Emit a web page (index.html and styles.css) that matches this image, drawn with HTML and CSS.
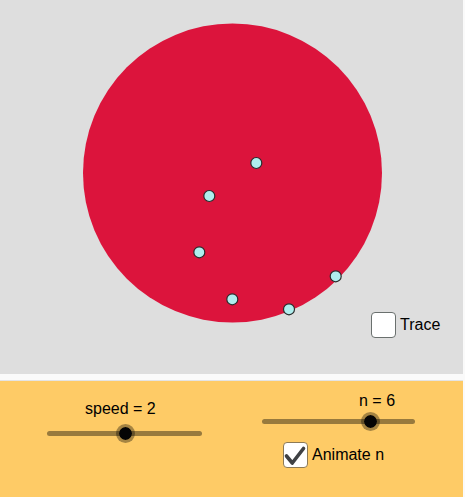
FILE: index.html
```html
<!DOCTYPE html>
<html>
<head>
<meta charset="utf-8">
<link rel="stylesheet" href="styles.css">
</head>
<body>
<div class="app">
  <div class="canvas">
    <svg class="graph" width="463" height="374" viewBox="0 0 463 374">
      <circle cx="232.5" cy="173" r="149.5" fill="#dc143c"/>
      <g fill="#afeeee" stroke="#2b2b2b" stroke-width="1.2">
        <circle cx="256.3" cy="163" r="5.5"/>
        <circle cx="209.3" cy="196" r="5.5"/>
        <circle cx="199.3" cy="252.3" r="5.5"/>
        <circle cx="232.3" cy="299.3" r="5.5"/>
        <circle cx="289" cy="309.3" r="5.5"/>
        <circle cx="335.7" cy="276.3" r="5.5"/>
      </g>
    </svg>
    <label class="check trace">
      <span class="box"></span>
      <span class="check-label">Trace</span>
    </label>
  </div>
  <div class="divider"></div>
  <div class="panel">
    <div class="col col-left">
      <div class="slider-label label-speed">speed = 2</div>
      <div class="slider">
        <div class="track"></div>
        <div class="knob" style="left: 68.5px"></div>
      </div>
    </div>
    <div class="col col-right">
      <div class="slider-label label-n">n = 6</div>
      <div class="slider">
        <div class="track"></div>
        <div class="knob" style="left: 98.5px"></div>
      </div>
      <label class="check animate">
        <span class="box">
          <svg width="26" height="27" viewBox="0 0 26 27">
            <path d="M3.5 14 L9.3 21 L20.5 6.5" fill="none" stroke="#3f4144" stroke-width="3.6" stroke-linecap="round" stroke-linejoin="round"/>
          </svg>
        </span>
        <span class="check-label">Animate n</span>
      </label>
    </div>
  </div>
</div>
</body>
</html>
```

FILE: styles.css
```css
html, body {
  margin: 0;
  padding: 0;
}

body {
  font-family: "Liberation Sans", Arial, sans-serif;
  font-size: 16px;
  color: #000;
  background: #fafafa;
}

.app {
  width: 463px;
  height: 497px;
  overflow: hidden;
}

.canvas {
  position: relative;
  height: 374px;
  background: #dedede;
}

.graph {
  display: block;
}

.divider {
  height: 6px;
  background: #fafafa;
  border-bottom: 1px solid #e4e4e4;
}

.panel {
  height: 116px;
  background: #fecb66;
  display: flex;
}

.col {
  display: flex;
  flex-direction: column;
}

.col-left {
  margin-left: 47px;
  width: 155px;
  padding-top: 19px;
}

.col-right {
  margin-left: 60px;
  width: 153px;
  padding-top: 11px;
}

.slider-label {
  line-height: 18px;
  height: 18px;
  white-space: nowrap;
}

.label-speed {
  margin-left: 38px;
}

.label-n {
  margin-left: 97px;
}

.col-left .slider {
  margin-top: 6px;
}

.col-right .slider {
  margin-top: 2px;
}

.slider {
  position: relative;
  height: 19px;
  display: flex;
  align-items: center;
}

.track {
  width: 100%;
  height: 5px;
  border-radius: 3px;
  background: rgba(0, 0, 0, 0.4);
}

.knob {
  position: absolute;
  top: 0;
  width: 13px;
  height: 13px;
  border-radius: 50%;
  background: #050505;
  border: 3px solid rgba(0, 0, 0, 0.35);
  background-clip: content-box;
  box-sizing: content-box;
}

.check {
  display: flex;
  align-items: center;
  gap: 4px;
}

.box {
  width: 23px;
  height: 24px;
  background: #fff;
  border: 1.5px solid rgba(0, 0, 0, 0.55);
  border-radius: 4px;
  display: flex;
}

.box svg {
  display: block;
  margin: -1.5px;
}

.trace {
  position: absolute;
  left: 371px;
  top: 312px;
}

.trace .box {
  border-color: #6a706e;
}

.animate {
  margin-top: 11px;
  margin-left: 21px;
}

.animate .box {
  border-color: #8d7a55;
}

.check-label {
  line-height: 18px;
}
```
